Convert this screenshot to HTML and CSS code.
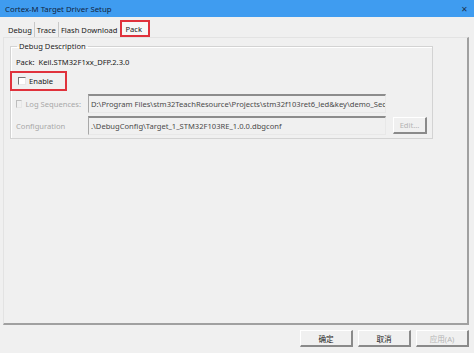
FILE: index.html
```html
<!DOCTYPE html>
<html lang="en">
<head>
  <meta charset="UTF-8" />
  <title>Cortex-M Target Driver Setup</title>
  <link rel="stylesheet" href="styles.css">
</head>
<body>
  <div class="window">
    <div class="titlebar">
      <span class="title">Cortex-M Target Driver Setup</span>
      <span class="close">&#x2715;</span>
    </div>

    <div class="tabs">
      <span class="tab">Debug</span>
      <span class="tab">Trace</span>
      <span class="tab">Flash Download</span>
      <span class="tab active">Pack</span>
    </div>

    <div class="panel">
      <fieldset class="group">
        <legend>Debug Description</legend>
        <div class="pack-line">Pack:&nbsp; Keil.STM32F1xx_DFP.2.3.0</div>

        <label class="enable">
          <span class="check"></span>
          <span>Enable</span>
        </label>

        <div class="row">
          <label class="row-label disabled">
            <span class="check off"></span>
            <span>Log Sequences:</span>
          </label>
          <div class="field">D:\Program Files\stm32TeachResource\Projects\stm32f103ret6_led&amp;key\demo_Sequ</div>
        </div>

        <div class="row">
          <span class="row-label disabled">Configuration</span>
          <div class="field">.\DebugConfig\Target_1_STM32F103RE_1.0.0.dbgconf</div>
          <button class="btn small" disabled>Edit...</button>
        </div>
      </fieldset>
    </div>

    <div class="footer">
      <button class="btn">确定</button>
      <button class="btn">取消</button>
      <button class="btn" disabled>应用(A)</button>
    </div>
  </div>
</body>
</html>
```

FILE: styles.css
```css
* {
  box-sizing: border-box;
}

body {
  margin: 0;
  background: #fff;
  font-family: "Noto Sans", "Noto Sans CJK SC", sans-serif;
  font-size: 7.6px;
  color: #1a1a1a;
}

.window {
  width: 474px;
  height: 353px;
  background: #f0f0f0;
  overflow: hidden;
}

.titlebar {
  height: 17px;
  background: #3f9cf0;
  display: flex;
  align-items: center;
  justify-content: space-between;
  padding: 0 6px 0 5px;
}

.title {
  color: #10243f;
  font-size: 7.8px;
}

.close {
  color: #1c3553;
  font-size: 8px;
}

.tabs {
  display: flex;
  align-items: stretch;
  height: 20px;
  padding: 3px 0 0 6px;
}

.tab {
  display: flex;
  align-items: center;
  padding: 0 2px;
  border-left: 1px solid #c8c8c8;
  margin-top: 2px;
  font-size: 7.6px;
}

.tab:first-child {
  border-left: none;
}

.tab.active {
  margin-top: 0;
  margin-left: 1px;
  padding: 0 6px 0 3px;
  border: 2px solid #e0323c;
  background: #f7f7f7;
}

.panel {
  margin: 0 5px 0 3px;
  height: 288px;
  border-left: 1px solid #e3e3e3;
  border-top: 1px solid #e3e3e3;
  border-right: 2px solid #a0a0a0;
  border-bottom: 2px solid #a0a0a0;
  padding: 3px 37px 0 6px;
}

.group {
  margin: 0;
  height: 98px;
  border: 1px solid #d3d3d3;
  box-shadow: inset 1px 1px 0 #fff;
  padding: 0 5px;
}

.group legend {
  padding: 0 2px;
  margin-left: 1px;
  color: #222;
}

.pack-line {
  margin-top: 6px;
  height: 12px;
}

.enable {
  display: flex;
  align-items: center;
  gap: 3px;
  width: 57px;
  height: 20px;
  margin: 2px 0 0 -6px;
  padding-left: 6px;
  border: 2px solid #e0323c;
}

.check {
  width: 8px;
  height: 8px;
  background: #fff;
  border-top: 1px solid #777;
  border-left: 1px solid #777;
  border-right: 1px solid #e8e8e8;
  border-bottom: 1px solid #e8e8e8;
}

.check.off {
  background: #f0f0f0;
  border-color: #bdbdbd #e6e6e6 #e6e6e6 #bdbdbd;
}

.row {
  display: flex;
  align-items: center;
  gap: 7px;
  margin-top: 3px;
  height: 19px;
}

.row-label {
  display: flex;
  align-items: center;
  gap: 3px;
  width: 65px;
  white-space: nowrap;
}

.disabled {
  color: #a8a8a8;
}

.field {
  width: 298px;
  height: 19px;
  line-height: 16px;
  padding-left: 2px;
  white-space: nowrap;
  overflow: hidden;
  color: #4a4a4a;
  background: #f0f0f0;
  border-top: 2px solid #8c8c8c;
  border-left: 1px solid #a8a8a8;
  border-right: 1px solid #e8e8e8;
  border-bottom: 1px solid #e8e8e8;
}

.btn {
  font-family: inherit;
  font-size: 7.6px;
  color: #222;
  width: 53px;
  height: 17px;
  padding: 0;
  background: #f0f0f0;
  border-top: 1px solid #fff;
  border-left: 1px solid #fff;
  border-right: 2px solid #8a8a8a;
  border-bottom: 2px solid #8a8a8a;
}

.btn:disabled {
  color: #b4b4b4;
}

.btn.small {
  width: 34px;
}

.footer {
  display: flex;
  justify-content: flex-end;
  gap: 5px;
  padding: 5px 5px 0 0;
}
```
